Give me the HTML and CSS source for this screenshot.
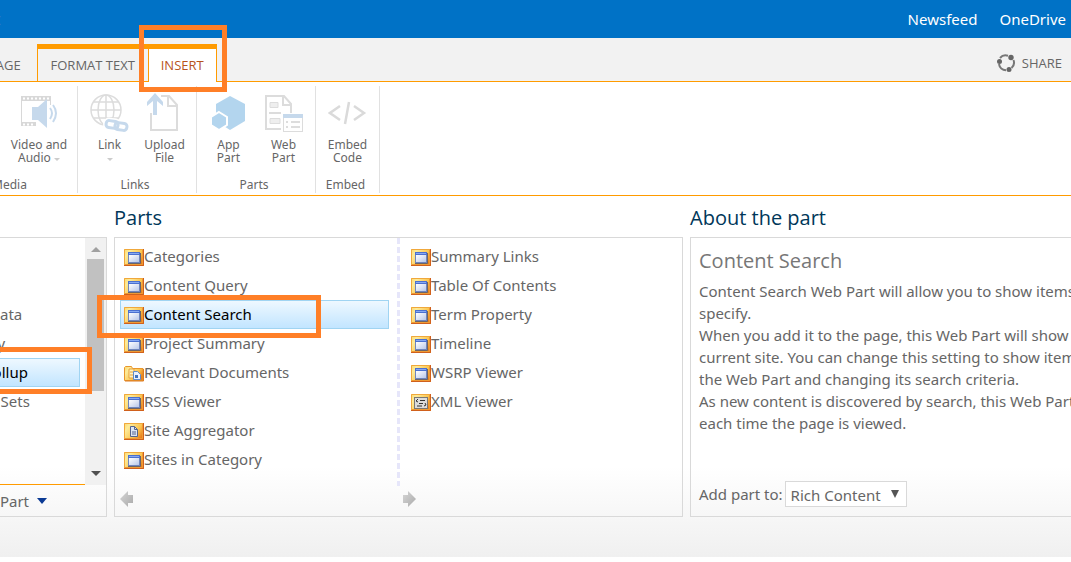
FILE: index.html
```html
<!DOCTYPE html>
<html lang="en">

<head>
    <meta charset="UTF-8">
    <meta name="viewport" content="width=device-width, initial-scale=1.0">
    <title>Insert Web Part</title>
    <link rel="stylesheet" href="styles.css">
</head>

<body>
    <svg class="defs" aria-hidden="true">
        <defs>
            <linearGradient id="gold" x1="0" y1="0" x2="1" y2=".6">
                <stop offset="0" stop-color="#fbd668" />
                <stop offset=".25" stop-color="#fdeb9a" />
                <stop offset=".7" stop-color="#fbc550" />
                <stop offset="1" stop-color="#e8801c" />
            </linearGradient>
            <linearGradient id="pane" x1="0" y1="0" x2="1" y2="1">
                <stop offset="0" stop-color="#fff" />
                <stop offset="1" stop-color="#b9c8ea" />
            </linearGradient>
            <linearGradient id="grey" x1="0" y1="0" x2="1" y2="1">
                <stop offset="0" stop-color="#d6d6d6" />
                <stop offset="1" stop-color="#aaa" />
            </linearGradient>
            <symbol id="frame" viewBox="0 0 20 17">
                <rect width="20" height="17" fill="url(#gold)" />
                <path d="M.5 16V.5H19" fill="none" stroke="#f0a83c" />
                <path d="M19.500 0v16.500H0" fill="none" stroke="#d0601c" />
                <path d="M18.500 1v14.500H1" fill="none" stroke="#ee9a34" />
            </symbol>
            <symbol id="part" viewBox="0 0 20 17">
                <use href="#frame" />
                <rect x="4" y="3" width="12" height="11" fill="#6f86bd" />
                <rect x="4" y="3" width="12" height="3" fill="#4a70d0" />
                <rect x="5" y="4" width="10" height="1" fill="#86a8f2" />
                <rect x="5" y="6" width="10" height="7" fill="url(#pane)" />
                <path d="M4 14.500h12.500V4" fill="none" stroke="#6b6468" />
            </symbol>
            <symbol id="folder" viewBox="0 0 20 17">
                <path d="M.5 15.500V2.500l1-1h6l1 2H19v12z" fill="url(#gold)" stroke="#e8962c" />
                <path d="M1 16h18.500V4" fill="none" stroke="#dd7a20" />
                <path d="M5 4h5v9H5zM6 7h3M6 10h3" fill="#fff3c0" stroke="#e7a33c" />
                <path d="M9.500 6.500h4l3 3v5h-7z" fill="#e9f1fc" stroke="#5f8cc8" />
                <path d="M11 10h3v3h-3z" fill="#3f74be" />
            </symbol>
            <symbol id="site" viewBox="0 0 20 17">
                <use href="#frame" />
                <path d="M6.500 3.500h4l3 3v7h-7z" fill="#dce5f5" stroke="#56658c" />
                <path d="M10.500 3.500v3h3M8 9h4M8 11h4" fill="none" stroke="#56658c" />
            </symbol>
            <symbol id="xml" viewBox="0 0 20 17">
                <use href="#frame" />
                <rect x="3.500" y="3.500" width="13" height="11" fill="#dcdcdc" stroke="#777" />
                <path d="M7 5L5 7l2 1M9 6.500h5M8 9.500h4M14 9l1 2-2 1M6 12h5" fill="none" stroke="#333" />
            </symbol>
        </defs>
    </svg>

    <div class="page">
        <header class="suitebar">
            <span class="brand">SharePoint</span>
            <nav class="suitelinks">
                <a href="#">Newsfeed</a>
                <a href="#">OneDrive</a>
            </nav>
        </header>

        <div class="tabrow">
            <div class="tabs">
                <button class="tab" type="button">PAGE</button>
                <div class="context">
                    <button class="tab format" type="button">FORMAT TEXT</button>
                    <button class="tab active" type="button">INSERT</button>
                </div>
            </div>
            <button class="share" type="button">
                <svg width="20" height="20" viewBox="0 0 20 20">
                    <g fill="none" stroke="#777" stroke-width="2">
                        <path d="M4 5A7.300 7.300 0 0 1 12 2.800" />
                        <path d="M17.500 7a7.300 7.300 0 0 1-2 8" />
                        <path d="M10 17.300A7.300 7.300 0 0 1 3 11" />
                    </g>
                    <circle cx="15" cy="4.500" r="2.700" fill="#666" />
                    <circle cx="3.500" cy="8.500" r="2.500" fill="#666" />
                    <circle cx="13" cy="16.500" r="2.500" fill="#666" />
                </svg>
                SHARE
            </button>
        </div>

        <div class="ribbon">
            <section class="group">
                <div class="buttons">
                    <button class="cmd" type="button">
                        <svg width="40" height="40" viewBox="0 0 40 40">
                            <path d="M5 6h30v28H5z" fill="none" stroke="#ddd" stroke-width="2" />
                        </svg>
                        Picture
                    </button>
                    <button class="cmd wide" type="button">
                        <svg width="40" height="40" viewBox="0 0 40 40">
                            <path d="M2 4h30v5H2zM2 30h15v4H2z" fill="#d8d8d8" />
                            <path d="M2.500 4v30M31.500 4v9" stroke="#d8d8d8" />
                            <path d="M4 6.500h27M4 32.500h12" stroke="#fff" stroke-width="2" stroke-dasharray="2 2" />
                            <path d="M13 15h6l9-8v29l-9-8h-6z" fill="#c6d9ec" />
                            <path d="M31 16q4 5 0 11M34 13q6 8 0 17" fill="none" stroke="#c6d9ec" stroke-width="2" />
                        </svg>
                        Video and<span>Audio <i class="caret"></i></span>
                    </button>
                </div>
                <h2 class="grouplabel">Media</h2>
            </section>
            <section class="group">
                <div class="buttons">
                    <button class="cmd" type="button">
                        <svg width="40" height="40" viewBox="0 0 40 40">
                            <g fill="none" stroke="#dcdcdc" stroke-width="1.500">
                                <circle cx="16" cy="18" r="15" />
                                <ellipse cx="16" cy="18" rx="8" ry="15" />
                                <path d="M16 3v30M1 18h30M4 10h24M4 26h24" />
                            </g>
                            <g fill="#fff" stroke="#fff" stroke-width="6">
                                <rect x="16" y="29" width="12" height="7" rx="3" transform="rotate(8 22 33)" />
                                <rect x="25" y="31" width="12" height="7" rx="3" transform="rotate(8 31 34)" />
                            </g>
                            <g fill="none" stroke="#c6d9ec" stroke-width="3">
                                <rect x="16" y="29" width="12" height="7" rx="3" transform="rotate(8 22 33)" />
                                <rect x="25" y="31" width="12" height="7" rx="3" transform="rotate(8 31 34)" />
                            </g>
                        </svg>
                        Link<span><i class="caret"></i></span>
                    </button>
                    <button class="cmd" type="button">
                        <svg width="40" height="40" viewBox="0 0 40 40">
                            <path d="M16 4h8l8 9v25H6V21" fill="none" stroke="#dcdcdc" stroke-width="2" />
                            <path d="M23 4v10h9" fill="none" stroke="#dcdcdc" stroke-width="2" />
                            <path d="M10 1l8 9v4l-6-5v14H8V9l-6 5v-4z" fill="#c6d9ec" />
                        </svg>
                        Upload<span>File</span>
                    </button>
                </div>
                <h2 class="grouplabel">Links</h2>
            </section>
            <section class="group">
                <div class="buttons">
                    <button class="cmd" type="button">
                        <svg width="40" height="40" viewBox="0 0 40 40">
                            <path d="M21 4l15 8v17l-15 9-14-9V12z" fill="#b3d5ee" />
                            <path d="M10 20l8 5v8l-8 5-8-5v-8z" fill="#b3d5ee" stroke="#fff" stroke-width="2" />
                        </svg>
                        App<span>Part</span>
                    </button>
                    <button class="cmd" type="button">
                        <svg width="40" height="40" viewBox="0 0 40 40">
                            <path d="M17 37H2V4h18l7 8v9" fill="none" stroke="#dcdcdc" stroke-width="2" />
                            <path d="M19 4v9h8" fill="none" stroke="#dcdcdc" stroke-width="2" />
                            <path d="M6 10.500h8v5H6zM6 26.500h10v5H6z" fill="#eee" stroke="#dcdcdc" />
                            <path d="M5 21h12" stroke="#dcdcdc" stroke-width="2" />
                            <rect x="19.500" y="22.500" width="19" height="17" fill="#fff" stroke="#dcdcdc" />
                            <path d="M19 22h20v4H19z" fill="#c6d9ec" />
                            <path d="M22 30h2m3 0h9M22 35h2m3 0h9" stroke="#ddd" stroke-width="2" />
                        </svg>
                        Web<span>Part</span>
                    </button>
                </div>
                <h2 class="grouplabel">Parts</h2>
            </section>
            <section class="group">
                <div class="buttons">
                    <button class="cmd" type="button">
                        <svg width="40" height="40" viewBox="0 0 40 40">
                            <path d="M12 14L2 21l10 7M26 14l10 7-10 7M21 10l-4 22" fill="none" stroke="#dadada" stroke-width="2.500" />
                        </svg>
                        Embed<span>Code</span>
                    </button>
                </div>
                <h2 class="grouplabel">Embed</h2>
            </section>
        </div>

        <main class="picker">
            <section class="column categories">
                <h3>Categories</h3>
                <div class="panel">
                    <div class="scroller">
                        <ul class="catlist">
                            <li>Apps</li>
                            <li>Blog</li>
                            <li>Business Data</li>
                            <li>Community</li>
                            <li class="selected">Content Rollup</li>
                            <li>Document Sets</li>
                            <li>Filters</li>
                            <li>Forms</li>
                            <li>Media and Content</li>
                        </ul>
                        <div class="scrollbar">
                            <i class="up"></i>
                            <i class="thumb"></i>
                            <i class="down"></i>
                        </div>
                    </div>
                    <button class="upload" type="button">Upload a Web Part <i></i></button>
                </div>
            </section>

            <section class="column parts">
                <h3>Parts</h3>
                <div class="panel">
                    <div class="partcols">
                        <ul class="partlist">
                            <li><svg><use href="#part" /></svg>Categories</li>
                            <li><svg><use href="#part" /></svg>Content Query</li>
                            <li class="selected"><svg><use href="#part" /></svg>Content Search</li>
                            <li><svg><use href="#part" /></svg>Project Summary</li>
                            <li><svg><use href="#folder" /></svg>Relevant Documents</li>
                            <li><svg><use href="#part" /></svg>RSS Viewer</li>
                            <li><svg><use href="#site" /></svg>Site Aggregator</li>
                            <li><svg><use href="#part" /></svg>Sites in Category</li>
                        </ul>
                        <div class="divider"></div>
                        <ul class="partlist second">
                            <li><svg><use href="#part" /></svg>Summary Links</li>
                            <li><svg><use href="#part" /></svg>Table Of Contents</li>
                            <li><svg><use href="#part" /></svg>Term Property</li>
                            <li><svg><use href="#part" /></svg>Timeline</li>
                            <li><svg><use href="#part" /></svg>WSRP Viewer</li>
                            <li><svg><use href="#xml" /></svg>XML Viewer</li>
                        </ul>
                    </div>
                    <div class="pager">
                        <button type="button" aria-label="Previous">
                            <svg width="16" height="16" viewBox="0 0 16 16"><path d="M1 8l8-8v4h5v8H9v4z" fill="url(#grey)" /></svg>
                        </button>
                        <button type="button" aria-label="Next">
                            <svg width="16" height="16" viewBox="0 0 16 16"><path d="M15 8L7 0v4H2v8h5v4z" fill="url(#grey)" /></svg>
                        </button>
                    </div>
                </div>
            </section>

            <section class="column about">
                <h3>About the part</h3>
                <div class="panel">
                    <h4>Content Search</h4>
                    <p>
                        Content Search Web Part will allow you to show items that<br>
                        specify.<br>
                        When you add it to the page, this Web Part will show items<br>
                        current site. You can change this setting to show items from<br>
                        the Web Part and changing its search criteria.<br>
                        As new content is discovered by search, this Web Part will<br>
                        each time the page is viewed.
                    </p>
                    <div class="addto">
                        <label for="zone">Add part to:</label>
                        <span class="dropdown">
                            <select id="zone">
                                <option>Rich Content</option>
                            </select>
                            <i></i>
                        </span>
                    </div>
                </div>
            </section>
        </main>
    </div>

    <div class="mark mark-tab"></div>
    <div class="mark mark-part"></div>
    <div class="mark mark-category"></div>
</body>

</html>
```
FILE: styles.css
```css
* {
    box-sizing: border-box;
}

body {
    margin: 0;
    position: relative;
    overflow: hidden;
    background: #fff;
    color: #666;
    font-family: "Noto Sans", "Open Sans", sans-serif;
    font-size: 15px;
}

h2, h3, h4, p, ul {
    margin: 0;
    padding: 0;
    font-weight: normal;
}

h3, h4 {
    font-family: "Open Sans", "Noto Sans", sans-serif;
}

ul {
    list-style: none;
}

button, select {
    font: inherit;
    color: inherit;
    background: none;
    border: 0;
    padding: 0;
    margin: 0;
}

.defs {
    position: absolute;
    width: 0;
    height: 0;
}

/* the page is scrolled a little to the right */
.page {
    margin-left: -100px;
}

.suitebar {
    display: flex;
    justify-content: space-between;
    align-items: center;
    height: 38px;
    padding: 0 5px 0 18px;
    background: #0072c6;
    color: #fff;
}

.brand {
    font-size: 16px;
}

.suitelinks {
    display: flex;
    gap: 22px;
}

.suitelinks a {
    color: #fff;
    text-decoration: none;
}

.tabrow {
    display: flex;
    justify-content: space-between;
    height: 44px;
    background: #f2f2f2;
    border-bottom: 1px solid #ff9b00;
    font-family: "Open Sans", "Noto Sans", sans-serif;
    font-size: 13px;
}

.tabs {
    display: flex;
    align-items: flex-end;
    height: 44px;
    padding-left: 76px;
}

.tab {
    height: 33px;
    padding: 0 12px 2px;
}

.context {
    display: flex;
    margin-left: 4px;
    border-top: 5px solid #ff9b00;
}

.format {
    width: 111px;
    border-left: 1px solid #ff9b00;
}

.active {
    width: 69px;
    background: #fff;
    color: #b8541c;
    border: solid #ff9b00;
    border-width: 0 1px;
}

.share {
    display: flex;
    align-items: center;
    gap: 6px;
    padding: 6px 9px 0 0;
    align-self: center;
}

.ribbon {
    display: flex;
    height: 114px;
    padding: 4px 0 2px 46px;
    border-bottom: 1px solid #ff9b00;
    font-size: 12px;
}

.group {
    display: flex;
    flex-direction: column;
    justify-content: space-between;
    padding: 6px 4px 0;
    border-right: 1px solid #e1e1e1;
}

.buttons {
    display: flex;
}

.cmd {
    display: flex;
    flex-direction: column;
    align-items: center;
    width: 55px;
    line-height: 13px;
}

.cmd svg {
    margin-bottom: 6px;
}

.wide {
    width: 68px;
}

.caret {
    display: inline-block;
    border: 3px solid transparent;
    border-top-color: #ccc;
    border-bottom: 0;
    vertical-align: 1px;
}

.grouplabel {
    font-size: 12px;
    line-height: 16px;
    padding-right: 4px;
    text-align: center;
}

.picker {
    display: flex;
    gap: 7px;
    height: 361px;
    padding: 0 0 40px;
    background: linear-gradient(#fff 75%, #f0f0f0);
}

.column {
    display: flex;
    flex-direction: column;
}

.column h3 {
    height: 41px;
    line-height: 44px;
    font-size: 20px;
    color: #003759;
}

.panel {
    flex: 1;
    display: flex;
    flex-direction: column;
    border: 1px solid #d9d9d9;
}

.categories {
    width: 207px;
}

.scroller {
    display: flex;
    height: 247px;
    overflow: hidden;
}

.catlist {
    flex: 1;
    padding: 4px 5px 0 12px;
    border-bottom: 1px solid #ff9b00;
    height: 247px;
    overflow: hidden;
}

.catlist li {
    height: 29px;
    line-height: 27px;
    padding-left: 9px;
    border: 1px solid transparent;
}

.catlist .selected,
.partlist .selected {
    color: #000;
    border: 1px solid #a0d4f2;
    background: linear-gradient(#eef8ff, #c2e5ff);
}

.scrollbar {
    display: flex;
    flex-direction: column;
    align-items: center;
    width: 21px;
    background: #f1f1f1;
}

.up {
    margin: 9px 0 7px;
    border: 5px solid transparent;
    border-top: 0;
    border-bottom-color: #a0a0a0;
}

.thumb {
    width: 17px;
    height: 132px;
    background: #c1c1c1;
}

.down {
    margin: auto 0 9px;
    border: 5px solid transparent;
    border-bottom: 0;
    border-top-color: #505050;
}

.upload {
    display: flex;
    align-items: center;
    justify-content: flex-end;
    gap: 8px;
    flex: 1;
    padding-right: 59px;
    white-space: nowrap;
}

.upload i {
    border: 5px solid transparent;
    border-top: 6px solid #0b3a94;
    border-bottom: 0;
}

.parts {
    width: 569px;
}

.partcols {
    display: flex;
    height: 248px;
}

.partlist {
    width: 282px;
    padding: 4px 8px 0 5px;
}

.second {
    padding-left: 7px;
}

.partlist li {
    display: flex;
    align-items: center;
    height: 29px;
    line-height: 27px;
    padding-left: 3px;
    border: 1px solid transparent;
}

.partlist svg {
    width: 20px;
    height: 17px;
    margin-top: 2px;
}

.divider {
    width: 3px;
    background: repeating-linear-gradient(#e6e6fa 0 6px, #fff 6px 9px);
}

.pager {
    display: flex;
    gap: 266px;
    padding: 5px 4px;
}

.pager svg {
    display: block;
}

.about {
    flex: 1;
    min-width: 380px;
}

.about .panel {
    padding: 8px 0 9px 8px;
    border-right: 0;
    white-space: nowrap;
    overflow: hidden;
}

.about h4 {
    font-size: 20px;
    line-height: 30px;
    color: #777;
}

.about p {
    padding-top: 4px;
    line-height: 22px;
}

.addto {
    display: flex;
    align-items: center;
    gap: 2px;
    margin-top: auto;
}

.dropdown {
    position: relative;
}

.dropdown select {
    display: block;
    appearance: none;
    width: 122px;
    height: 26px;
    padding: 2px 0 0 5px;
    background: #fff;
    border: 1px solid #d9d9d9;
}

.dropdown i {
    position: absolute;
    top: 9px;
    right: 8px;
    border: 4px solid transparent;
    border-top: 8px solid #555;
    border-bottom: 0;
    pointer-events: none;
}

/* highlight boxes drawn over the page */
.mark {
    position: absolute;
    border: 5px solid #ff7f27;
}

.mark-tab {
    left: 139px;
    top: 25px;
    width: 88px;
    height: 67px;
}

.mark-part {
    left: 97px;
    top: 295px;
    width: 224px;
    height: 43px;
}

.mark-category {
    left: -10px;
    top: 347px;
    width: 102px;
    height: 47px;
}
```
